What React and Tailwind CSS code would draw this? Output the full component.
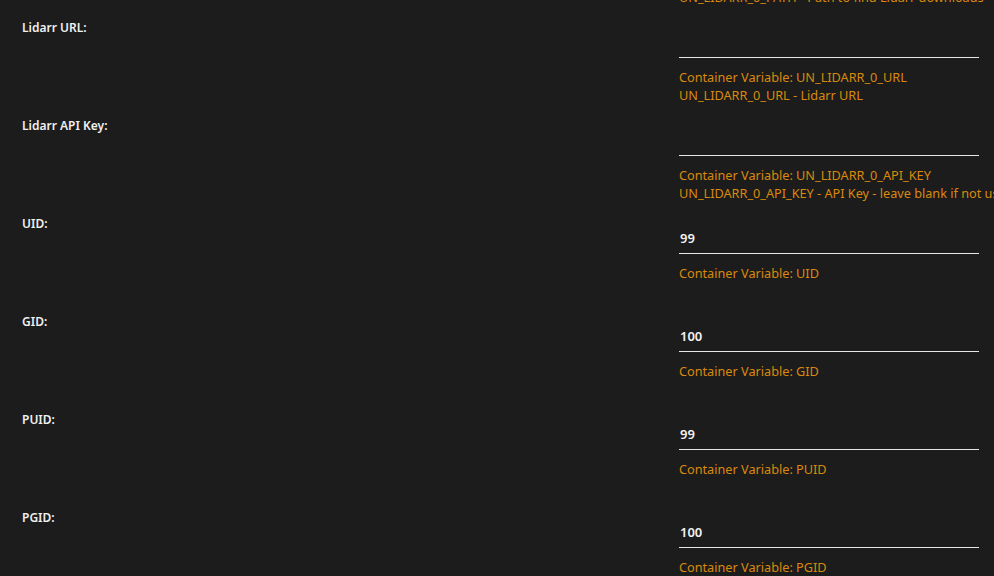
const rows = [
  { label: 'Lidarr Path:', value: '', help: ['Container Variable: UN_LIDARR_0_PATH', 'UN_LIDARR_0_PATH - Path to find Lidarr downloads'] },
  { label: 'Lidarr URL:', value: '', help: ['Container Variable: UN_LIDARR_0_URL', 'UN_LIDARR_0_URL - Lidarr URL'] },
  { label: 'Lidarr API Key:', value: '', help: ['Container Variable: UN_LIDARR_0_API_KEY', 'UN_LIDARR_0_API_KEY - API Key - leave blank if not using Lidarr'] },
  { label: 'UID:', value: '99', help: ['Container Variable: UID'] },
  { label: 'GID:', value: '100', help: ['Container Variable: GID'] },
  { label: 'PUID:', value: '99', help: ['Container Variable: PUID'] },
  { label: 'PGID:', value: '100', help: ['Container Variable: PGID'] },
];

function ConfigRow({ label, value, help }) {
  return (
    <div className="flex h-[98px]">
      <div className="w-[679px] shrink-0 pl-[22px]">
        <span className="text-[12px] leading-[18px] font-semibold text-[#f0f0f0]">{label}</span>
      </div>
      <div className="w-[300px] shrink-0 pt-[13px]">
        <input
          type="text"
          defaultValue={value}
          className="block w-full h-[31px] bg-transparent border-0 border-b border-[#e6e6e6] pl-px text-[13px] font-semibold text-[#f2f2f2] outline-none"
        />
        <div className="mt-[10px] text-[12.7px] leading-[18px] text-[#d98a0c] whitespace-nowrap">
          {help.map((line) => (
            <div key={line}>{line}</div>
          ))}
        </div>
      </div>
    </div>
  );
}

export default function App() {
  return (
    <div className="w-[994px] h-[576px] overflow-hidden bg-[#1c1c1c] font-['Noto_Sans',sans-serif]">
      <div className="mt-[-84px]">
        {rows.map((row) => (
          <ConfigRow key={row.label} {...row} />
        ))}
      </div>
    </div>
  );
}
